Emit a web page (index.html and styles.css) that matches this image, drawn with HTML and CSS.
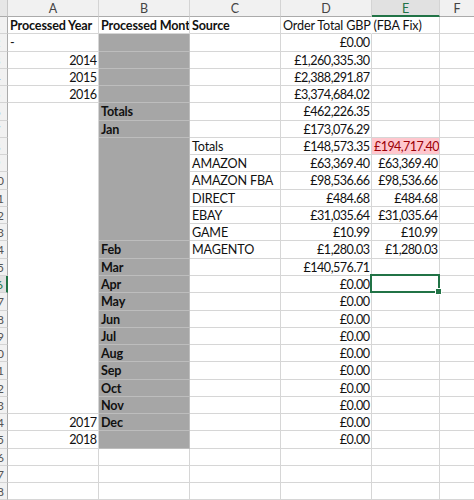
FILE: index.html
```html
<!DOCTYPE html>
<html>
<head>
<meta charset="utf-8">
<link rel="stylesheet" href="styles.css">
</head>
<body>
<div class="sheet">
  <div class="corner"></div><div class="ch">A</div><div class="ch">B</div><div class="ch">C</div><div class="ch">D</div><div class="ch ch-sel">E</div><div class="ch">F</div>

  <div class="rh"><span>1</span></div><div class="c b">Processed Year</div><div class="c b">Processed Month</div><div class="c b">Source</div><div class="c ov">Order Total GBP (FBA Fix)</div><div class="c"></div><div class="c"></div>
  <div class="rh"><span>2</span></div><div class="c">-</div><div class="c g"></div><div class="c"></div><div class="c r">£0.00</div><div class="c"></div><div class="c"></div>
  <div class="rh"><span>3</span></div><div class="c r">2014</div><div class="c g"></div><div class="c"></div><div class="c r">£1,260,335.30</div><div class="c"></div><div class="c"></div>
  <div class="rh"><span>4</span></div><div class="c r">2015</div><div class="c g"></div><div class="c"></div><div class="c r">£2,388,291.87</div><div class="c"></div><div class="c"></div>
  <div class="rh"><span>5</span></div><div class="c r">2016</div><div class="c g"></div><div class="c"></div><div class="c r">£3,374,684.02</div><div class="c"></div><div class="c"></div>
  <div class="rh"><span>6</span></div><div class="c span18"></div><div class="c g b">Totals</div><div class="c"></div><div class="c r">£462,226.35</div><div class="c"></div><div class="c"></div>
  <div class="rh"><span>7</span></div><div class="c g b">Jan</div><div class="c"></div><div class="c r">£173,076.29</div><div class="c"></div><div class="c"></div>
  <div class="rh"><span>8</span></div><div class="c g span6"></div><div class="c">Totals</div><div class="c r">£148,573.35</div><div class="c r pink">£194,717.40</div><div class="c"></div>
  <div class="rh"><span>9</span></div><div class="c">AMAZON</div><div class="c r">£63,369.40</div><div class="c r">£63,369.40</div><div class="c"></div>
  <div class="rh"><span>10</span></div><div class="c">AMAZON FBA</div><div class="c r">£98,536.66</div><div class="c r">£98,536.66</div><div class="c"></div>
  <div class="rh"><span>11</span></div><div class="c">DIRECT</div><div class="c r">£484.68</div><div class="c r">£484.68</div><div class="c"></div>
  <div class="rh"><span>12</span></div><div class="c">EBAY</div><div class="c r">£31,035.64</div><div class="c r">£31,035.64</div><div class="c"></div>
  <div class="rh"><span>13</span></div><div class="c">GAME</div><div class="c r">£10.99</div><div class="c r">£10.99</div><div class="c"></div>
  <div class="rh"><span>14</span></div><div class="c g b">Feb</div><div class="c">MAGENTO</div><div class="c r">£1,280.03</div><div class="c r">£1,280.03</div><div class="c"></div>
  <div class="rh"><span>15</span></div><div class="c g b">Mar</div><div class="c"></div><div class="c r">£140,576.71</div><div class="c"></div><div class="c"></div>
  <div class="rh rh-sel"><span>16</span></div><div class="c g b">Apr</div><div class="c"></div><div class="c r">£0.00</div><div class="c sel"></div><div class="c"></div>
  <div class="rh"><span>17</span></div><div class="c g b">May</div><div class="c"></div><div class="c r">£0.00</div><div class="c"></div><div class="c"></div>
  <div class="rh"><span>18</span></div><div class="c g b">Jun</div><div class="c"></div><div class="c r">£0.00</div><div class="c"></div><div class="c"></div>
  <div class="rh"><span>19</span></div><div class="c g b">Jul</div><div class="c"></div><div class="c r">£0.00</div><div class="c"></div><div class="c"></div>
  <div class="rh"><span>20</span></div><div class="c g b">Aug</div><div class="c"></div><div class="c r">£0.00</div><div class="c"></div><div class="c"></div>
  <div class="rh"><span>21</span></div><div class="c g b">Sep</div><div class="c"></div><div class="c r">£0.00</div><div class="c"></div><div class="c"></div>
  <div class="rh"><span>22</span></div><div class="c g b">Oct</div><div class="c"></div><div class="c r">£0.00</div><div class="c"></div><div class="c"></div>
  <div class="rh"><span>23</span></div><div class="c g b">Nov</div><div class="c"></div><div class="c r">£0.00</div><div class="c"></div><div class="c"></div>
  <div class="rh"><span>24</span></div><div class="c r">2017</div><div class="c g b">Dec</div><div class="c"></div><div class="c r">£0.00</div><div class="c"></div><div class="c"></div>
  <div class="rh"><span>25</span></div><div class="c r">2018</div><div class="c g"></div><div class="c"></div><div class="c r">£0.00</div><div class="c"></div><div class="c"></div>
  <div class="rh"><span>26</span></div><div class="c"></div><div class="c"></div><div class="c"></div><div class="c"></div><div class="c"></div><div class="c"></div>
  <div class="rh"><span>27</span></div><div class="c"></div><div class="c"></div><div class="c"></div><div class="c"></div><div class="c"></div><div class="c"></div>
  <div class="rh"><span>28</span></div><div class="c"></div><div class="c"></div><div class="c"></div><div class="c"></div><div class="c"></div><div class="c"></div>
</div>
</body>
</html>
```
FILE: styles.css
```css
html, body {
  margin: 0;
  padding: 0;
  background: #ffffff;
}
body {
  width: 474px;
  height: 500px;
  overflow: hidden;
  font-family: Lato, "Noto Sans", sans-serif;
  font-size: 12.6px;
  color: #111111;
}
.sheet {
  display: grid;
  grid-template-columns: 8px 91px 91px 91px 91px 68px 35px;
  grid-template-rows: 17px;
  grid-auto-rows: 17.27px;
  width: 474px;
}
.corner {
  background: #e6e6e6;
  border-right: 1px solid #c6c6c6;
  border-bottom: 1px solid #ababab;
  box-sizing: border-box;
}
.ch {
  box-sizing: border-box;
  background: #f1f1f1;
  border-right: 1px solid #d4d4d4;
  border-bottom: 1px solid #ababab;
  color: #444444;
  text-align: center;
  line-height: 17px;
  font-size: 12.5px;
}
.ch:last-child {
  border-right: 0;
  text-align: left;
  padding-left: 23px;
}
.ch-sel {
  background: #e1e1e1;
  color: #217346;
  border-bottom: 2px solid #217346;
}
.rh {
  box-sizing: border-box;
  background: #f1f1f1;
  border-right: 1px solid #ababab;
  border-bottom: 1px solid #d4d4d4;
  display: flex;
  justify-content: flex-end;
  overflow: hidden;
  color: #555555;
  font-size: 12px;
  line-height: 17px;
}
.rh span {
  flex: 0 0 20px;
  text-align: center;
}
.rh-sel {
  background: #e1e1e1;
  color: #217346;
  border-right: 2px solid #217346;
}
.c {
  box-sizing: border-box;
  border-right: 1px solid #d6d6d6;
  border-bottom: 1px solid #d6d6d6;
  padding: 0 2px;
  white-space: nowrap;
  overflow: hidden;
  line-height: 18px;
  letter-spacing: -0.15px;
  position: relative;
}
.r {
  text-align: right;
  letter-spacing: -0.5px;
  padding-right: 1.5px;
}
.b { font-weight: 700; letter-spacing: -0.15px; }
.g {
  background: #a6a6a6;
  border-bottom-color: #bdbdbd;
  border-right-color: #bdbdbd;
}
.ov {
  overflow: visible;
  border-right-color: transparent;
}
.pink {
  background: #ffc7ce;
  color: #9c0006;
  letter-spacing: -0.6px;
}
.span18 { grid-row: span 18; }
.span6 { grid-row: span 6; }
.sel { overflow: visible; }
.sel::before {
  content: "";
  position: absolute;
  left: -2px;
  top: -2px;
  right: -1px;
  bottom: -1px;
  border: 2px solid #217346;
}
.sel::after {
  content: "";
  position: absolute;
  right: -3px;
  bottom: -3px;
  width: 5px;
  height: 5px;
  background: #217346;
  border: 1px solid #ffffff;
  box-sizing: content-box;
  z-index: 1;
}
```
